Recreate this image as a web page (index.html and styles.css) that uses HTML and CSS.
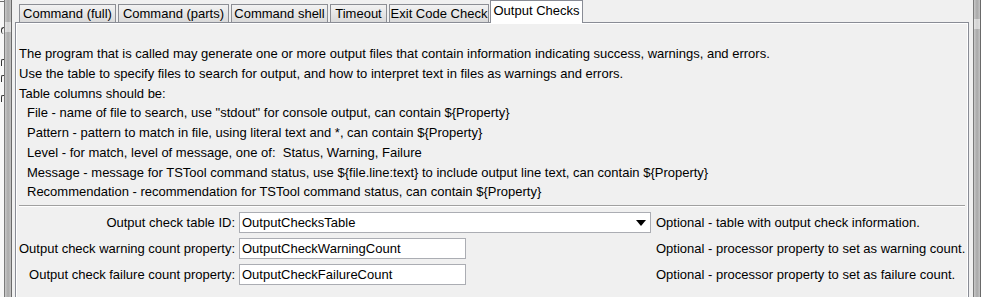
FILE: index.html
```html
<!DOCTYPE html>
<html>
<head>
    <title>Output Checks</title>
    <link rel="stylesheet" href="styles.css">
</head>
<body>

    <div class="window">
        <div class="side side-left">
            <div class="ghost">
                <span class="mark m1"></span>
                <span class="mark m2"></span>
                <span class="mark m3"></span>
                <span class="mark m4"></span>
            </div>
            <div class="rail"><div class="thumb"></div></div>
        </div>

        <div class="dialog">
            <div class="tabs">
                <div class="tab tab-full">Command (full)</div>
                <div class="tab tab-parts">Command (parts)</div>
                <div class="tab tab-shell">Command shell</div>
                <div class="tab tab-timeout">Timeout</div>
                <div class="tab tab-exit">Exit Code Check</div>
                <div class="tab tab-output selected">Output Checks</div>
            </div>

            <div class="panel">
                <div class="notes">
                    <p>The program that is called may generate one or more output files that contain information indicating success, warnings, and errors.</p>
                    <p>Use the table to specify files to search for output, and how to interpret text in files as warnings and errors.</p>
                    <p>Table columns should be:</p>
                    <p class="indent">File - name of file to search, use "stdout" for console output, can contain ${Property}</p>
                    <p class="indent">Pattern - pattern to match in file, using literal text and *, can contain ${Property}</p>
                    <p class="indent">Level - for match, level of message, one of:&nbsp; Status, Warning, Failure</p>
                    <p class="indent">Message - message for TSTool command status, use ${file.line:text} to include output line text, can contain ${Property}</p>
                    <p class="indent">Recommendation - recommendation for TSTool command status, can contain ${Property}</p>
                </div>

                <div class="sep"></div>

                <div class="form">
                    <label class="lbl">Output check table ID:</label>
                    <div class="combo">
                        <span>OutputChecksTable</span>
                        <span class="arrow"></span>
                    </div>
                    <div class="hint">Optional - table with output check information.</div>

                    <label class="lbl">Output check warning count property:</label>
                    <div class="field">OutputCheckWarningCount</div>
                    <div class="hint">Optional - processor property to set as warning count.</div>

                    <label class="lbl">Output check failure count property:</label>
                    <div class="field">OutputCheckFailureCount</div>
                    <div class="hint">Optional - processor property to set as failure count.</div>
                </div>
            </div>
        </div>

        <div class="side side-right">
            <div class="rail"><div class="thumb"></div></div>
        </div>
    </div>

</body>
</html>
```

FILE: styles.css
```css
body {
    margin: 0;
    padding: 0;
    background-color: #f0f0f0;
    font-family: "Liberation Sans", Arial, sans-serif;
    font-size: 13px;
    color: #000000;
    width: 981px;
    height: 297px;
    overflow: hidden;
}

.window {
    display: flex;
    height: 297px;
}

/* bits of the window behind, on both sides */
.side {
    display: flex;
    flex-shrink: 0;
}

.side-left {
    width: 15px;
}

.side-right {
    width: 13px;
    padding-left: 4px;
    box-sizing: border-box;
}

.ghost {
    width: 4px;
    background-color: #f7f7f7;
    border-top: 1px solid #f7f7f7;
    display: flex;
    flex-direction: column;
    align-items: flex-end;
    box-shadow: inset 0 12px 0 -11px #6d6d6d;
}

/* clipped letters of the window behind */
.mark {
    width: 2px;
    height: 6px;
    border-left: 1px solid #333;
    border-top: 1px solid #333;
    border-radius: 2px 0 0 0;
}

.m1 { margin-top: 26px; border-radius: 3px 0 0 3px; }
.m2 { margin-top: 25px; }
.m3 { margin-top: 9px; }
.m4 { margin-top: 13px; }

.rail {
    width: 6px;
    border-left: 1px solid #7a7a7a;
    border-right: 1px solid #6a6a6a;
    background: linear-gradient(to right, #c9c9c9, #a9a9a9 50%, #c4c4c4);
}

.thumb {
    margin-top: 22px;
    height: 10px;
    background: linear-gradient(to right, #e4e4e4, #d2d2d2 50%, #e0e0e0);
}

.side-right .thumb {
    margin-top: 19px;
}

.dialog {
    width: 954px;
    flex-shrink: 0;
}

/* tabs */
.tabs {
    display: flex;
    align-items: flex-end;
    height: 22px;
    padding-left: 4px;
    gap: 2px;
    position: relative;
    z-index: 1;
}

.tab {
    height: 18px;
    box-sizing: border-box;
    border: 1px solid #8c8e94;
    border-bottom: none;
    background: linear-gradient(to bottom, #f2f2f2, #e6e6e6 50%, #d9d9d9);
    text-align: center;
    line-height: 17px;
    white-space: nowrap;
}

.tab-full { width: 97px; }
.tab-parts { width: 111px; }
.tab-shell { width: 97px; }
.tab-timeout { width: 57px; }
.tab-exit { width: 100px; }

.tab.selected {
    width: 93px;
    height: 23px;
    margin-left: -1px;
    margin-bottom: -1px;
    background: #ffffff;
    line-height: 19px;
    border-color: #898c95;
}

/* panel */
.panel {
    height: 280px;
    box-sizing: border-box;
    border: 1px solid #898c95;
    box-shadow: inset 1px 1px 0 #ffffff, inset -1px 0 0 #ffffff;
    padding: 21px 3px 0 3px;
}

.notes p {
    margin: 0;
    line-height: 19.75px;
    white-space: nowrap;
}

.notes .indent {
    padding-left: 8px;
}

.sep {
    height: 1px;
    background-color: #a0a0a0;
    border-bottom: 1px solid #ffffff;
    margin: 3px 0 5px 0;
}

/* form rows */
.form {
    display: grid;
    grid-template-columns: 216px 412px 1fr;
    column-gap: 4px;
    row-gap: 5px;
    align-items: center;
}

.lbl {
    text-align: right;
    white-space: nowrap;
}

.combo, .field {
    height: 21px;
    box-sizing: border-box;
    background: #ffffff;
    border: 1px solid #abadb3;
    padding-left: 2px;
    line-height: 19px;
    white-space: nowrap;
}

.combo {
    display: flex;
    justify-content: space-between;
    align-items: center;
}

.field {
    width: 227px;
}

.arrow {
    width: 0;
    height: 0;
    border-left: 5px solid transparent;
    border-right: 5px solid transparent;
    border-top: 6px solid #000000;
    margin-right: 4px;
}

.hint {
    padding-left: 1px;
    white-space: nowrap;
}
```
